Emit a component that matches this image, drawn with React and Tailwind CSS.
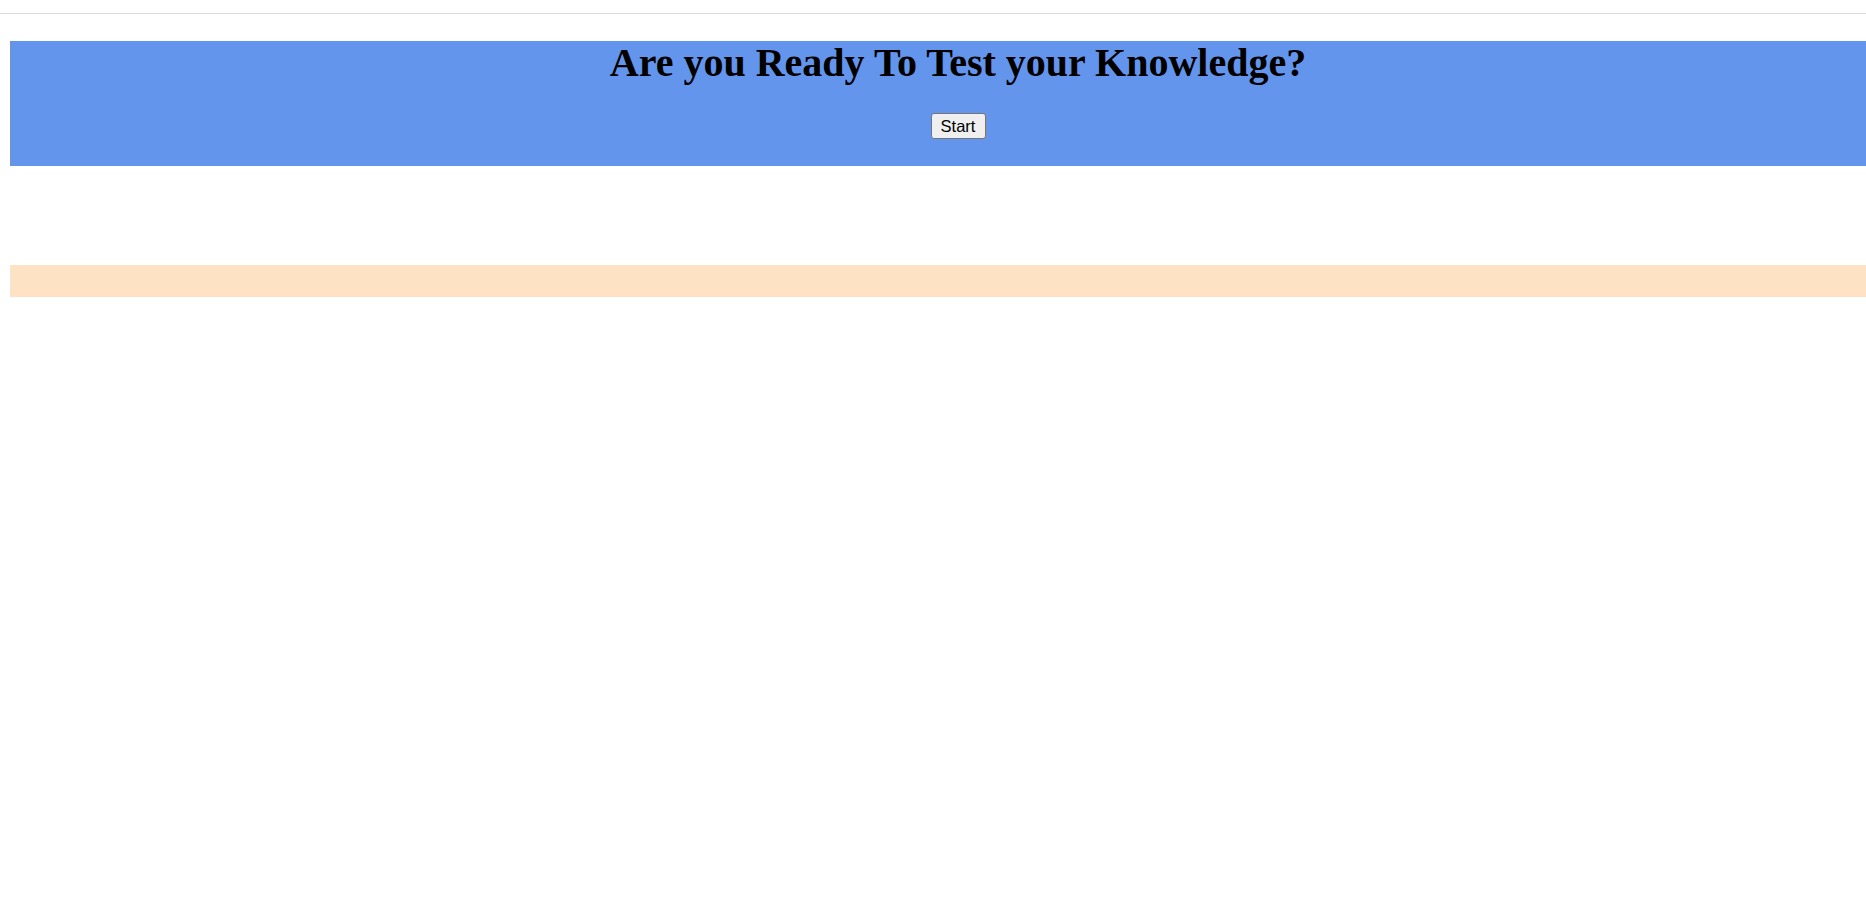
export default function App() {
  return (
    <div className="min-h-screen w-full overflow-hidden bg-white">
      {/* top rule */}
      <div className="h-[14px] border-b border-[#dadada]" />

      <div className="pl-[10px] pt-[27px]">
        {/* Quiz start banner */}
        <div className="w-[1896px] bg-[#6495ed] text-center pb-[27px]">
          <h1 className="m-0 h-[43px] text-[40px] font-bold leading-[43px] text-black font-['Liberation_Serif',serif]">
            Are you Ready To Test your Knowledge?
          </h1>
          <div className="mt-[29px]">
            <button className="h-[26px] w-[55px] rounded-[3px] border border-[#767676] bg-[#efefef] text-[16.5px] text-black font-['Liberation_Sans',Arial,sans-serif]">
              Start
            </button>
          </div>
        </div>

        {/* Question area (empty) */}
        <div className="mt-[99px] h-[32px] w-[1896px] bg-[#fde3c4]" />
      </div>
    </div>
  );
}
